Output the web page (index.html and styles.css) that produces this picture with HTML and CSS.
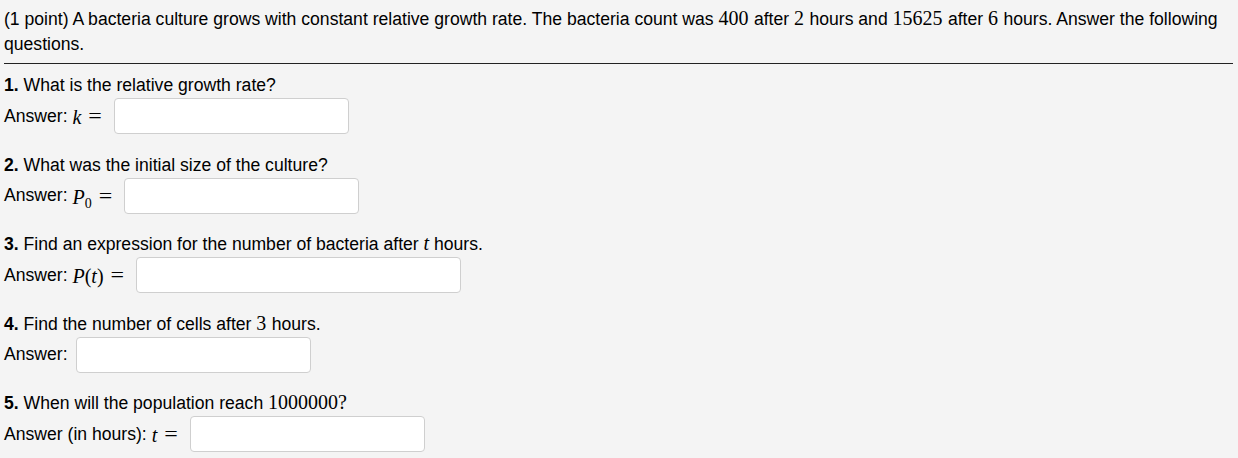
FILE: index.html
```html
<!DOCTYPE html>
<html>
<head>
<meta charset="utf-8">
<link rel="stylesheet" href="styles.css">
</head>
<body>
<div class="page">
  <p class="intro">(1 point) A bacteria culture grows with constant relative growth rate. The bacteria count was <span class="mn">400</span> after <span class="mn">2</span> hours and <span class="mn">15625</span> after <span class="mn">6</span> hours. Answer the following questions.</p>
  <hr class="rule">
  <div class="q">
    <div class="qtext"><b>1.</b> What is the relative growth rate?</div>
    <div class="ans">Answer: <span class="math"><i>k</i><span class="eq">=</span></span><input class="box w1" type="text"></div>
  </div>
  <div class="q">
    <div class="qtext"><b>2.</b> What was the initial size of the culture?</div>
    <div class="ans">Answer: <span class="math"><i>P</i><sub>0</sub><span class="eq">=</span></span><input class="box w2" type="text"></div>
  </div>
  <div class="q">
    <div class="qtext"><b>3.</b> Find an expression for the number of bacteria after <span class="math"><i>t</i></span> hours.</div>
    <div class="ans">Answer: <span class="math"><i>P</i>(<i>t</i>)<span class="eq">=</span></span><input class="box w3" type="text"></div>
  </div>
  <div class="q">
    <div class="qtext"><b>4.</b> Find the number of cells after <span class="mn">3</span> hours.</div>
    <div class="ans">Answer: <input class="box w4" type="text"></div>
  </div>
  <div class="q">
    <div class="qtext"><b>5.</b> When will the population reach <span class="mn">1000000?</span></div>
    <div class="ans">Answer (in hours): <span class="math"><i>t</i><span class="eq">=</span></span><input class="box w5" type="text"></div>
  </div>
</div>
</body>
</html>
```
FILE: styles.css
```css
html, body {
  margin: 0;
  padding: 0;
  background: #f4f4f4;
}
body {
  font-family: "Liberation Sans", Arial, sans-serif;
  font-size: 17.6px;
  color: #000;
}
.page {
  padding: 7px 4px 0 4px;
}
.intro {
  margin: 0;
  line-height: 25px;
}
.mn, .math {
  font-family: "Liberation Serif", "Times New Roman", serif;
  font-size: 20px;
  line-height: 1;
}
.mn {
  margin-right: 0.5px;
}
.math i {
  font-style: italic;
}
.math sub {
  font-size: 14px;
  vertical-align: -4px;
  line-height: 0;
}
.eq {
  display: inline-block;
  font-size: 24px;
  transform: scaleY(0.85);
  margin: 0 8px 0 7px;
}
.rule {
  margin: 6px 1px 9px 0;
  border: 0;
  border-top: 1px solid #222;
  height: 0;
}
.q {
  margin-bottom: 18.5px;
}
.qtext {
  line-height: 25px;
  height: 25px;
}
.ans {
  display: flex;
  align-items: center;
  height: 36px;
  white-space: pre;
}
.box {
  box-sizing: border-box;
  height: 36px;
  margin-left: 4px;
  border: 1px solid #cfcfcf;
  border-radius: 4px;
  background: #fff;
  padding: 4px 8px;
  font-size: 16px;
}
.w1, .w2, .w4, .w5 { width: 235px; }
.w3 { width: 325px; }
```
